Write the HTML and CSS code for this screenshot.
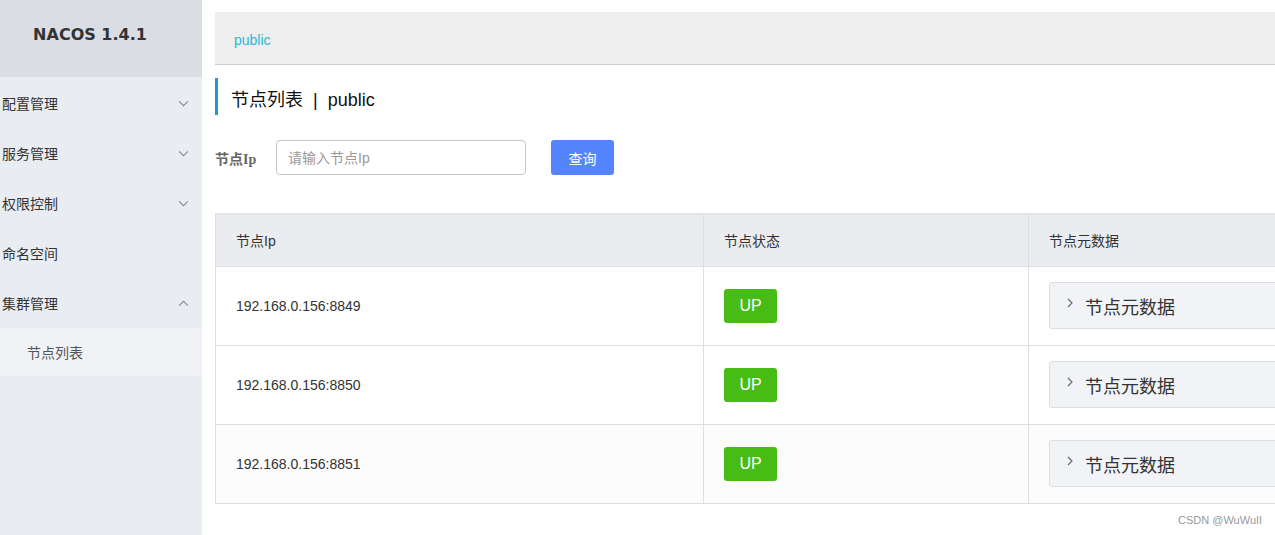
FILE: index.html
```html
<!DOCTYPE html>
<html lang="zh-CN">
<head>
    <meta charset="UTF-8">
    <meta name="viewport" content="width=device-width, initial-scale=1.0">
    <title>Nacos</title>
    <link rel="stylesheet" href="styles.css">
</head>
<body>
    <div class="layout">
        <aside class="sidebar">
            <div class="brand">NACOS 1.4.1</div>
            <ul class="menu">
                <li class="menu-item">配置管理
                    <svg class="arrow" viewBox="0 0 12 8"><path d="M1 1.5 6 6.5 11 1.5"/></svg>
                </li>
                <li class="menu-item">服务管理
                    <svg class="arrow" viewBox="0 0 12 8"><path d="M1 1.5 6 6.5 11 1.5"/></svg>
                </li>
                <li class="menu-item">权限控制
                    <svg class="arrow" viewBox="0 0 12 8"><path d="M1 1.5 6 6.5 11 1.5"/></svg>
                </li>
                <li class="menu-item">命名空间</li>
                <li class="menu-item">集群管理
                    <svg class="arrow" viewBox="0 0 12 8"><path d="M1 6.5 6 1.5 11 6.5"/></svg>
                </li>
                <li class="sub-item">节点列表</li>
            </ul>
        </aside>

        <main class="main">
            <div class="ns-bar"><span class="ns-link">public</span></div>

            <h2 class="page-title">节点列表 &nbsp;|&nbsp; public</h2>

            <div class="search-form">
                <label class="form-label">节点Ip</label>
                <input class="form-input" type="text" placeholder="请输入节点Ip">
                <button class="btn-primary">查询</button>
            </div>

            <table class="node-table">
                <colgroup>
                    <col class="col-ip">
                    <col class="col-state">
                    <col class="col-meta">
                </colgroup>
                <thead>
                    <tr>
                        <th>节点Ip</th>
                        <th>节点状态</th>
                        <th>节点元数据</th>
                    </tr>
                </thead>
                <tbody>
                    <tr>
                        <td>192.168.0.156:8849</td>
                        <td><span class="tag-up">UP</span></td>
                        <td>
                            <div class="collapse">
                                <svg class="collapse-arrow" viewBox="0 0 6 10"><path d="M1 1 5 5 1 9"/></svg>
                                节点元数据
                            </div>
                        </td>
                    </tr>
                    <tr>
                        <td>192.168.0.156:8850</td>
                        <td><span class="tag-up">UP</span></td>
                        <td>
                            <div class="collapse">
                                <svg class="collapse-arrow" viewBox="0 0 6 10"><path d="M1 1 5 5 1 9"/></svg>
                                节点元数据
                            </div>
                        </td>
                    </tr>
                    <tr class="row-hover">
                        <td>192.168.0.156:8851</td>
                        <td><span class="tag-up">UP</span></td>
                        <td>
                            <div class="collapse">
                                <svg class="collapse-arrow" viewBox="0 0 6 10"><path d="M1 1 5 5 1 9"/></svg>
                                节点元数据
                            </div>
                        </td>
                    </tr>
                </tbody>
            </table>

            <div class="watermark">CSDN @WuWuII</div>
        </main>
    </div>
</body>
</html>
```

FILE: styles.css
```css
* {
    margin: 0;
    padding: 0;
    box-sizing: border-box;
}

body {
    font-family: "Liberation Sans", "Noto Sans CJK SC", sans-serif;
    font-size: 14px;
    color: #333;
    background: #fff;
    width: 1275px;
    height: 535px;
    overflow: hidden;
}

.layout {
    display: flex;
    height: 535px;
}

/* sidebar */
.sidebar {
    width: 202px;
    flex-shrink: 0;
    background: #e9ecf1;
}

.brand {
    height: 77px;
    background: #dadde3;
    font-family: "DejaVu Sans", "Liberation Sans", sans-serif;
    font-weight: bold;
    font-size: 16px;
    color: #333;
    display: flex;
    align-items: center;
    justify-content: center;
    padding: 0 22px 9px 0;
}

.menu {
    list-style: none;
    padding-top: 1px;
}

.menu-item {
    height: 50px;
    display: flex;
    align-items: center;
    justify-content: space-between;
    padding: 0 13px 0 2px;
    font-size: 14px;
    color: #333;
}

.arrow {
    width: 11px;
    height: 7px;
    fill: none;
    stroke: #888;
    stroke-width: 1.2;
}

.sub-item {
    height: 48px;
    display: flex;
    align-items: center;
    padding-left: 27px;
    background: #f0f2f6;
    color: #555;
}

/* main */
.main {
    flex: 1;
    padding: 12px 0 0 13px;
    position: relative;
    min-width: 0;
    overflow: hidden;
}

.ns-bar {
    height: 53px;
    background: #eeeeee;
    border-bottom: 1px solid #cccccc;
    display: flex;
    align-items: center;
    padding: 3px 0 0 19px;
    margin-right: -20px;
}

.ns-link {
    color: #2bb8d8;
    font-size: 14px;
}

.page-title {
    margin-top: 13px;
    height: 37px;
    border-left: 3px solid #1d9bd1;
    padding: 3px 0 0 13px;
    display: flex;
    align-items: center;
    font-size: 18px;
    font-weight: normal;
    color: #111;
}

.search-form {
    display: flex;
    align-items: center;
    margin-top: 25px;
    height: 35px;
}

.form-label {
    font-family: "Liberation Serif", "Noto Sans CJK SC", serif;
    font-weight: bold;
    font-size: 14px;
    color: #666;
    width: 61px;
}

.form-input {
    width: 250px;
    height: 35px;
    border: 1px solid #c4c6cf;
    border-radius: 4px;
    padding: 0 11px;
    font-family: "Liberation Sans", "Noto Sans CJK SC", sans-serif;
    font-size: 14px;
    color: #333;
    outline: none;
}

.form-input::placeholder {
    color: #999;
}

.btn-primary {
    margin-left: 25px;
    width: 63px;
    height: 35px;
    border: none;
    border-radius: 3px;
    background: #5584ff;
    color: #fff;
    font-family: "Liberation Sans", "Noto Sans CJK SC", sans-serif;
    font-size: 14px;
}

/* table */
.node-table {
    margin-top: 38px;
    width: 1200px;
    table-layout: fixed;
    border-collapse: collapse;
    border: 1px solid #dcdee3;
    border-top: 2px solid #e3e4e8;
}

.col-ip { width: 488px; }
.col-state { width: 325px; }
.col-meta { width: 387px; }

.node-table th {
    height: 52px;
    background: #ebecf0;
    font-weight: normal;
    text-align: left;
    padding: 0 20px;
    color: #333;
    border-right: 1px solid #dcdee3;
    border-bottom: 1px solid #dcdee3;
}

.node-table td {
    height: 79px;
    padding: 0 20px;
    border-right: 1px solid #dcdee3;
    border-bottom: 1px solid #dcdee3;
    color: #333;
}

.row-hover td {
    background: #fcfcfc;
}

.tag-up {
    display: inline-flex;
    align-items: center;
    justify-content: center;
    width: 53px;
    height: 34px;
    background: #46bc15;
    border-radius: 3px;
    color: #fff;
    font-size: 16px;
}

.collapse {
    height: 47px;
    display: flex;
    align-items: center;
    background: #f2f3f7;
    border: 1px solid #dcdee3;
    border-radius: 3px;
    padding-left: 17px;
    font-size: 18px;
    color: #333;
}

.collapse-arrow {
    width: 6px;
    height: 10px;
    fill: none;
    stroke: #666;
    stroke-width: 1.1;
    margin-right: 12px;
    margin-top: -6px;
}

.watermark {
    position: absolute;
    left: 976px;
    top: 514px;
    font-size: 11px;
    color: #999;
}
```
